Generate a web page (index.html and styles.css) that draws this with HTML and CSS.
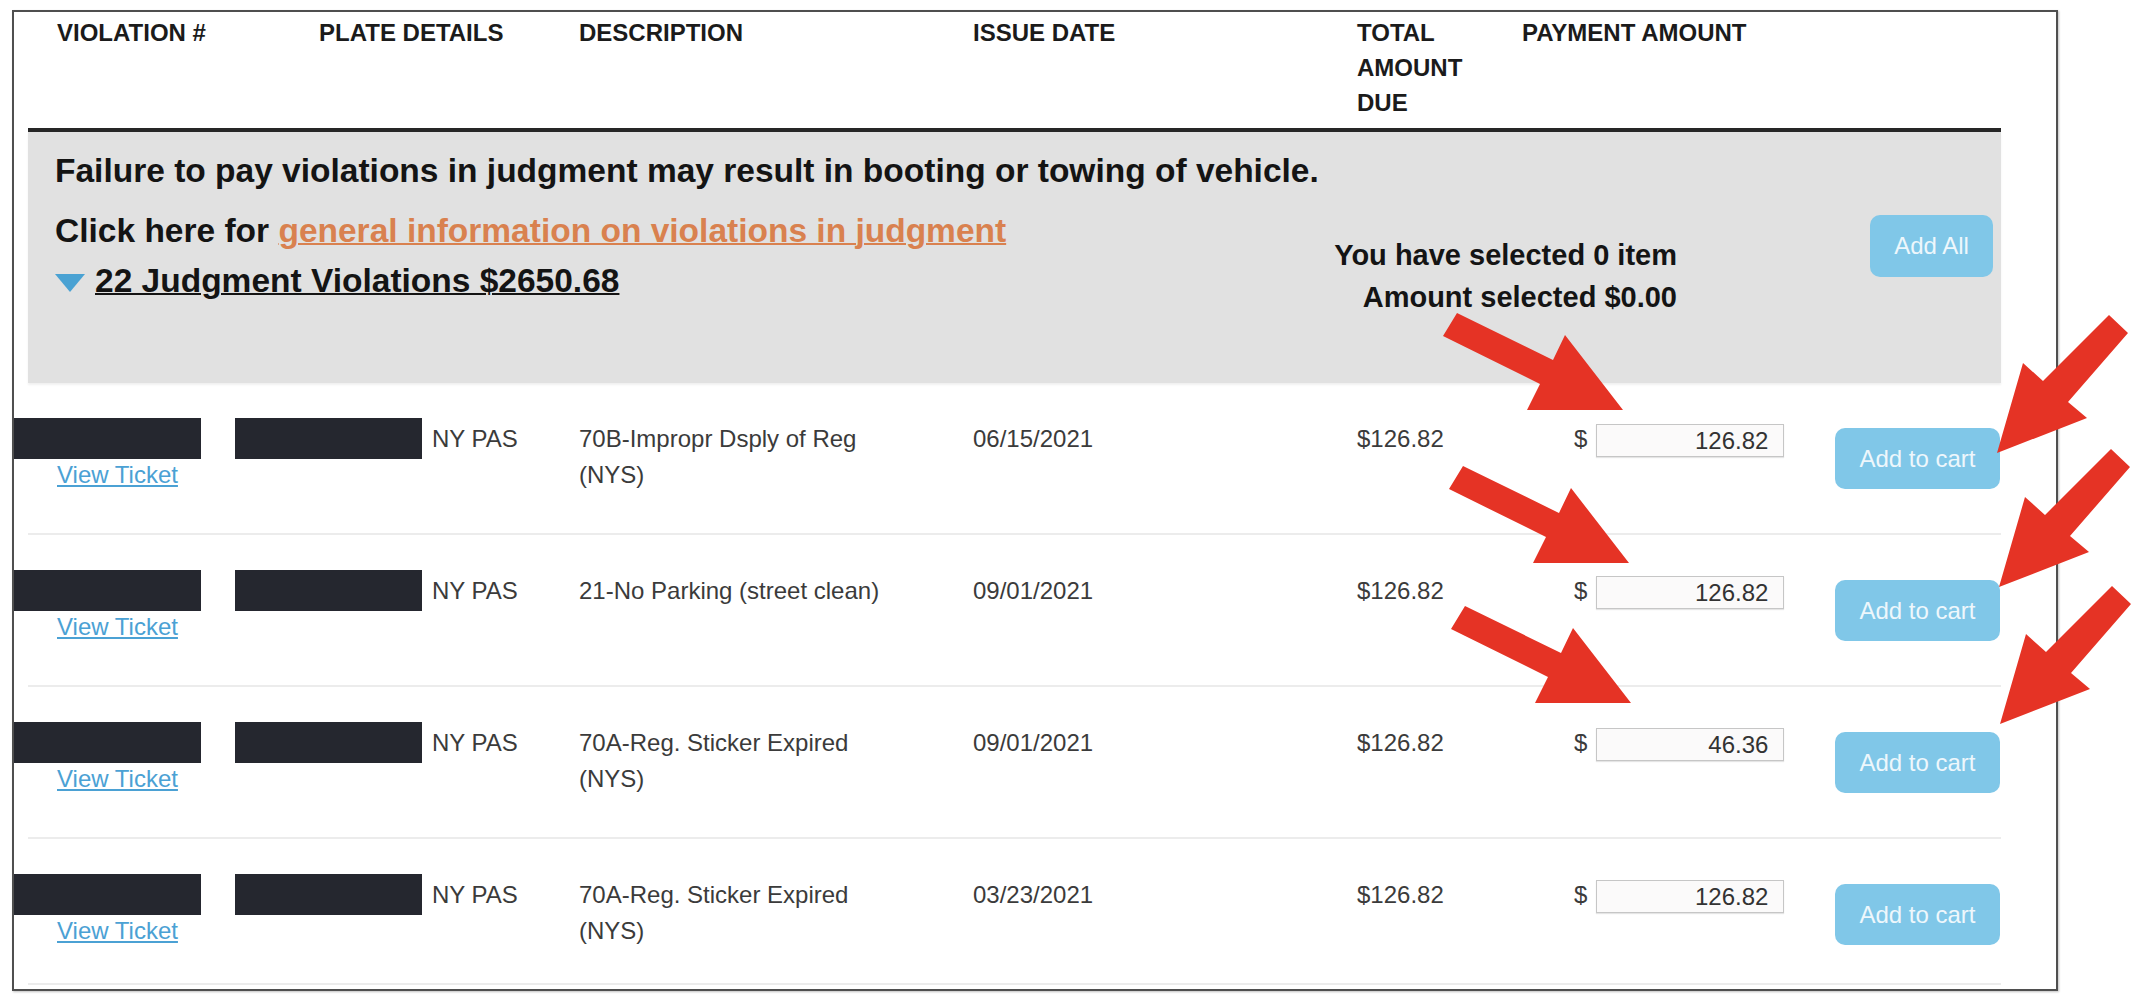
FILE: index.html
```html
<!DOCTYPE html>
<html lang="en">
<head>
  <meta charset="UTF-8">
  <title>Violations in Judgment</title>
  <link rel="stylesheet" href="styles.css">
</head>
<body>

<div class="frame">
  <div class="grid head">
    <div class="h-cell first">VIOLATION #</div>
    <div class="h-cell">PLATE DETAILS</div>
    <div class="h-cell">DESCRIPTION</div>
    <div class="h-cell">ISSUE DATE</div>
    <div class="h-cell">TOTAL<br>AMOUNT<br>DUE</div>
    <div class="h-cell">PAYMENT AMOUNT</div>
    <div class="h-cell"></div>
  </div>

  <div class="judgment">
    <div class="judgment-text">
      <p class="warn">Failure to pay violations in judgment may result in booting or towing of vehicle.</p>
      <p class="info">Click here for <a href="#">general information on violations in judgment</a></p>
      <p class="toggle"><span class="caret"></span><a href="#">22 Judgment Violations $2650.68</a></p>
    </div>
    <div class="selected">
      You have selected 0 item<br>
      Amount selected $0.00
    </div>
    <button class="btn add-all">Add All</button>
  </div>

  <div class="grid row">
    <div class="cell first"><span class="redact"></span><a class="ticket" href="#">View Ticket</a></div>
    <div class="cell plate"><span class="redact"></span><span>NY PAS</span></div>
    <div class="cell"><span class="desc">70B-Impropr Dsply of Reg (NYS)</span></div>
    <div class="cell">06/15/2021</div>
    <div class="cell">$126.82</div>
    <div class="cell pay">$ <input type="text" value="126.82"></div>
    <div class="cell"><button class="btn cart">Add to cart</button></div>
  </div>

  <div class="grid row">
    <div class="cell first"><span class="redact"></span><a class="ticket" href="#">View Ticket</a></div>
    <div class="cell plate"><span class="redact"></span><span>NY PAS</span></div>
    <div class="cell"><span class="desc">21-No Parking (street clean)</span></div>
    <div class="cell">09/01/2021</div>
    <div class="cell">$126.82</div>
    <div class="cell pay">$ <input type="text" value="126.82"></div>
    <div class="cell"><button class="btn cart">Add to cart</button></div>
  </div>

  <div class="grid row">
    <div class="cell first"><span class="redact"></span><a class="ticket" href="#">View Ticket</a></div>
    <div class="cell plate"><span class="redact"></span><span>NY PAS</span></div>
    <div class="cell"><span class="desc">70A-Reg. Sticker Expired (NYS)</span></div>
    <div class="cell">09/01/2021</div>
    <div class="cell">$126.82</div>
    <div class="cell pay">$ <input type="text" value="46.36"></div>
    <div class="cell"><button class="btn cart">Add to cart</button></div>
  </div>

  <div class="grid row">
    <div class="cell first"><span class="redact"></span><a class="ticket" href="#">View Ticket</a></div>
    <div class="cell plate"><span class="redact"></span><span>NY PAS</span></div>
    <div class="cell"><span class="desc">70A-Reg. Sticker Expired (NYS)</span></div>
    <div class="cell">03/23/2021</div>
    <div class="cell">$126.82</div>
    <div class="cell pay">$ <input type="text" value="126.82"></div>
    <div class="cell"><button class="btn cart">Add to cart</button></div>
  </div>
</div>

<!-- annotation arrows drawn over the screenshot -->
<svg class="arrows" width="2148" height="1006" viewBox="0 0 2148 1006">
  <g fill="#e53325">
    <polygon points="1623,410 1527,410 1540,384 1443,336 1457,313 1553,360 1565,335"/>
    <polygon points="1629,563 1533,563 1546,537 1449,489 1463,466 1559,513 1571,488"/>
    <polygon points="1631,703 1535,703 1548,677 1451,629 1465,606 1561,653 1573,628"/>
    <polygon points="1997,453 2087,418 2068,402 2128,333 2109,315 2043,381 2023,363"/>
    <polygon points="1999,587 2089,552 2070,536 2130,467 2111,449 2045,515 2025,497"/>
    <polygon points="2000,724 2090,689 2071,673 2131,604 2112,586 2046,652 2026,634"/>
  </g>
</svg>

</body>
</html>
```

FILE: styles.css
```css
body {
  font-family: 'Liberation Sans', Arial, sans-serif;
  margin: 0;
  padding: 0;
  background-color: #ffffff;
  position: relative;
  width: 2148px;
  height: 1006px;
  overflow: hidden;
}
.frame {
  box-sizing: border-box;
  margin: 10px 0 0 12px;
  width: 2046px;
  height: 981px;
  border: 2px solid #4f4f4f;
  padding: 0 55px 0 14px;
  box-shadow: 1px 1px 2px rgba(0,0,0,0.25);
}
.grid {
  display: grid;
  grid-template-columns: 291px 260px 394px 384px 165px 313px 166px;
}
.head {
  padding: 3px 0 8px;
  border-bottom: 4px solid #262626;
  font-size: 24px;
  font-weight: bold;
  line-height: 35px;
  color: #1b1b1b;
}
.first {
  padding-left: 29px;
}

/* judgment panel */
.judgment {
  box-sizing: border-box;
  display: flex;
  align-items: flex-start;
  height: 251px;
  padding: 19px 8px 0 27px;
  background-color: #e1e1e1;
  box-shadow: 0 2px 2px rgba(0,0,0,0.06);
  color: #141414;
}
.judgment-text {
  flex: 1;
  min-width: 0;
  white-space: nowrap;
  font-size: 33.5px;
  font-weight: bold;
  line-height: 40px;
}
.judgment-text p {
  margin: 0;
}
.judgment-text .info {
  margin-top: 20px;
}
.judgment-text .info a {
  color: #d9814f;
  text-decoration-thickness: 2px;
}
.judgment-text .toggle {
  margin-top: 10px;
}
.judgment-text .toggle a {
  color: #141414;
  text-decoration-thickness: 2px;
}
.caret {
  display: inline-block;
  width: 0;
  height: 0;
  border-left: 15px solid transparent;
  border-right: 15px solid transparent;
  border-top: 18px solid #4aa2d3;
  margin-right: 10px;
}
.selected {
  margin-top: 83px;
  text-align: right;
  font-size: 29px;
  font-weight: bold;
  line-height: 42px;
  white-space: nowrap;
}
.btn {
  border: none;
  border-radius: 10px;
  background-color: #80c7e8;
  color: #eef7fc;
  font-family: inherit;
  font-size: 24px;
  cursor: pointer;
}
.add-all {
  width: 123px;
  height: 62px;
  margin: 64px 0 0 193px;
  flex: none;
}

/* violation rows */
.row {
  box-sizing: border-box;
  height: 152px;
  padding-top: 38px;
  border-bottom: 2px solid #ececec;
  font-size: 24px;
  line-height: 36px;
  color: #3b3b3b;
}
.row:last-child {
  height: 146px;
}
.redact {
  display: block;
  width: 187px;
  height: 41px;
  background-color: #25272f;
  margin: -3px 0 -2px -43px;
}
.ticket {
  color: #4ba1d4;
}
.plate {
  display: flex;
  align-items: flex-start;
}
.plate .redact {
  flex: none;
  margin: -3px 10px 0 -84px;
}
.desc {
  display: block;
  max-width: 320px;
}
.pay {
  display: flex;
  align-items: flex-start;
  padding-left: 52px;
  gap: 9px;
}
.pay input {
  box-sizing: border-box;
  width: 188px;
  height: 33px;
  margin-top: 3px;
  padding: 0 15px 0 4px;
  border: 1px solid #c6c6c6;
  background-color: #fbfafa;
  box-shadow: 0 1px 1px rgba(0,0,0,0.1);
  font-family: inherit;
  font-size: 24px;
  color: #333;
  text-align: right;
}
.cart {
  width: 165px;
  height: 61px;
  margin-top: 7px;
}

.arrows {
  position: absolute;
  top: 0;
  left: 0;
  pointer-events: none;
}
```
